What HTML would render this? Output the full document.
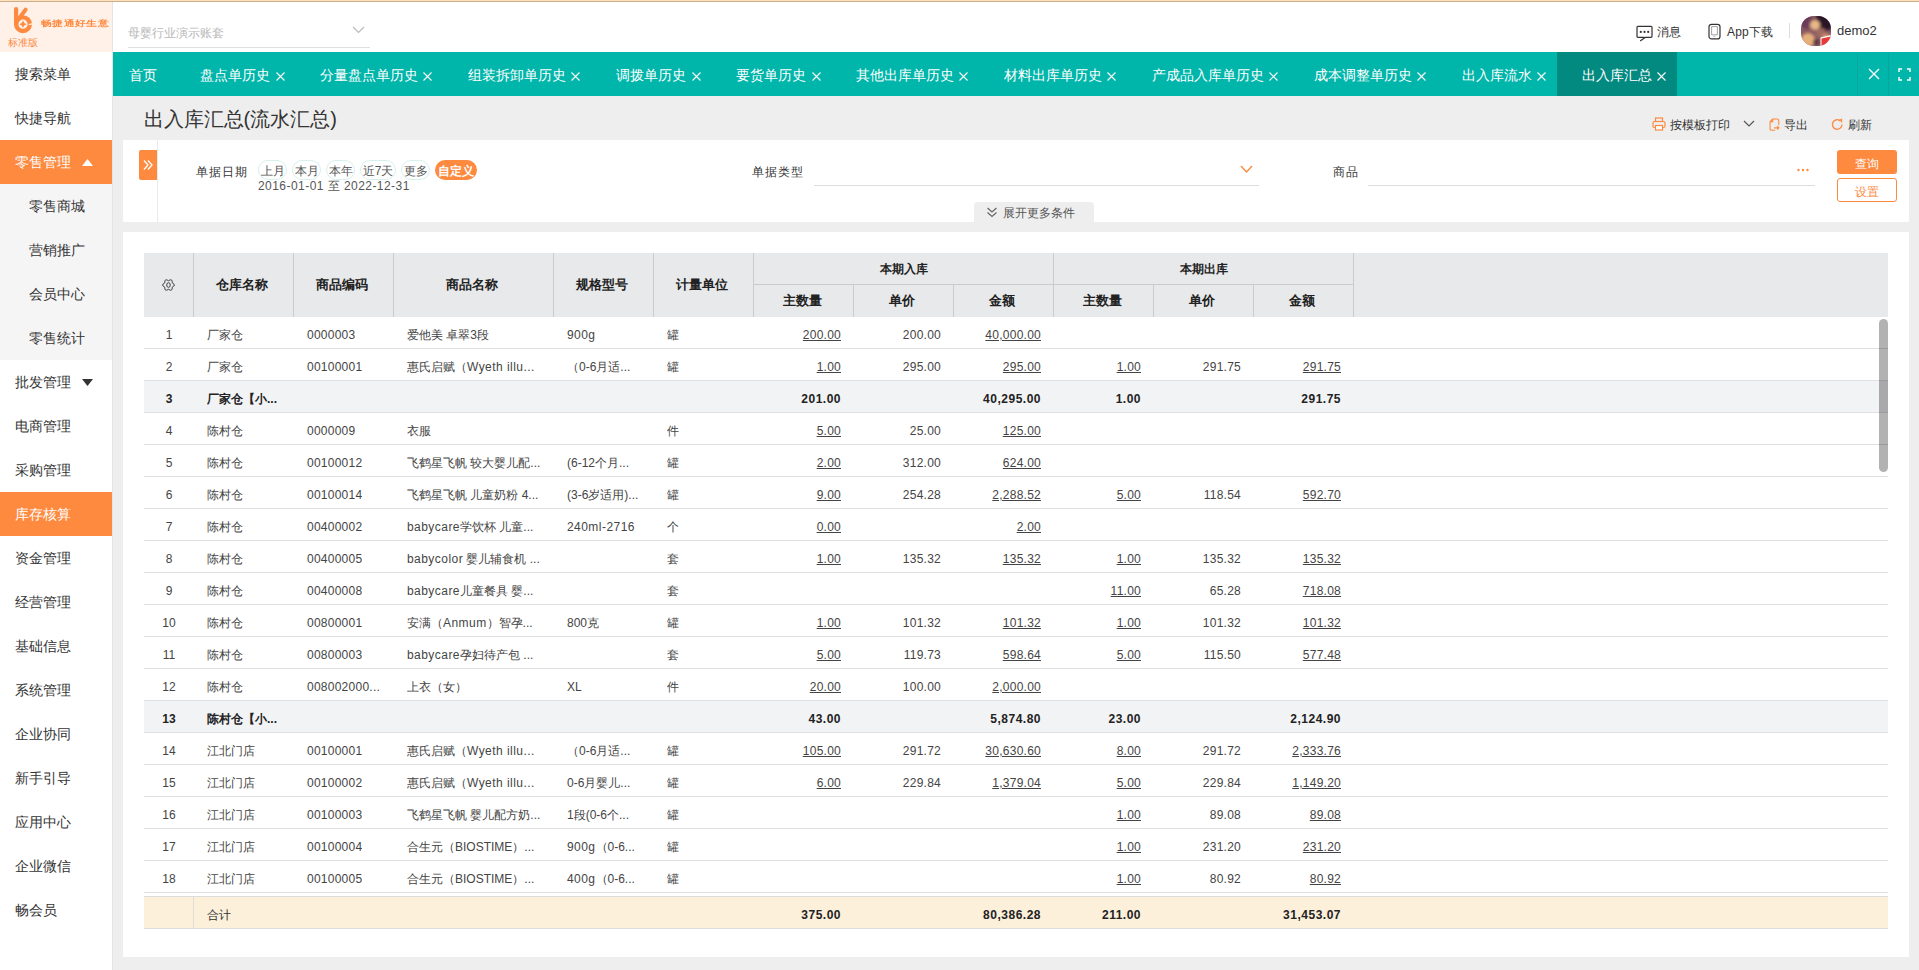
<!DOCTYPE html><html><head><meta charset="utf-8"><style>
*{margin:0;padding:0;box-sizing:border-box}
html,body{width:1919px;height:970px;overflow:hidden;background:#eeeeee;font-family:"Liberation Sans",sans-serif;color:#333}
.a{position:absolute;white-space:nowrap}
#topline{position:absolute;left:0;top:0;width:1919px;height:2px;background:linear-gradient(#ffe1b9 0,#ffe1b9 1px,#ccae90 1px,#ccae90 2px)}
#side{position:absolute;left:0;top:2px;width:113px;height:968px;background:#fff;border-right:1px solid #e4e4e4}
#logo{position:absolute;left:0;top:0;width:112px;height:50px;background:#fff0e8}
.mi{position:absolute;left:0;width:112px;height:44px;font-size:14px;line-height:44px;padding-left:15px;color:#333}
.mi.on{background:#fd8a3f;color:#fff}
.si{position:absolute;left:0;width:112px;height:44px;font-size:14px;line-height:44px;padding-left:29px;color:#333;background:#f5f5f5}
#header{position:absolute;left:113px;top:2px;width:1806px;height:50px;background:#fff}
#tabs{position:absolute;left:113px;top:52px;width:1806px;height:44px;background:#00b5aa}
.tab{position:absolute;top:0;height:44px;line-height:44px;font-size:14px;color:#fff}
.x{position:absolute;top:18px;width:9px;height:9px}
.panel{position:absolute;background:#fff}
table{border-collapse:collapse}
.th{position:absolute;background:#e8e9eb;font-weight:bold;font-size:13px;color:#222;text-align:center}
.row{position:absolute;left:144px;width:1744px;height:32px;border-bottom:1px solid #e3e4e6}
.c{position:absolute;top:0;height:31px;line-height:31px;font-size:12px;color:#444;overflow:hidden;white-space:nowrap}
.r{text-align:right}
.u{text-decoration:underline}
.n{letter-spacing:0.25px}
.m{letter-spacing:0.45px}
.n.b{letter-spacing:0.5px}
.b{font-weight:bold;color:#222}
</style></head><body>
<div id="topline"></div>
<div id="side"><div id="logo"></div></div>
<div class="mi " style="top:52px">搜索菜单</div>
<div class="mi " style="top:96px">快捷导航</div>
<div class="mi on" style="top:140px">零售管理</div>
<div class="si" style="top:184px">零售商城</div>
<div class="si" style="top:228px">营销推广</div>
<div class="si" style="top:272px">会员中心</div>
<div class="si" style="top:316px">零售统计</div>
<div class="mi " style="top:360px">批发管理</div>
<div class="mi " style="top:404px">电商管理</div>
<div class="mi " style="top:448px">采购管理</div>
<div class="mi on" style="top:492px">库存核算</div>
<div class="mi " style="top:536px">资金管理</div>
<div class="mi " style="top:580px">经营管理</div>
<div class="mi " style="top:624px">基础信息</div>
<div class="mi " style="top:668px">系统管理</div>
<div class="mi " style="top:712px">企业协同</div>
<div class="mi " style="top:756px">新手引导</div>
<div class="mi " style="top:800px">应用中心</div>
<div class="mi " style="top:844px">企业微信</div>
<div class="mi " style="top:888px">畅会员</div>
<svg class="a" style="left:82px;top:159px" width="11" height="8"><path d="M5.5 0 L11 7 L0 7Z" fill="#fff"/></svg>
<svg class="a" style="left:82px;top:379px" width="11" height="8"><path d="M0 0 L11 0 L5.5 7Z" fill="#333"/></svg>
<div class="a" style="left:41px;top:17.5px;font-size:11px;color:#fd8a3f;font-weight:bold;transform:scale(1.03,0.77);transform-origin:0 0">畅捷通好生意</div>
<div class="a" style="left:8px;top:36px;font-size:10px;color:#fd8a3f">标准版</div>
<svg class="a" style="left:0;top:0" width="40" height="40" viewBox="0 0 40 40"><g fill="none" stroke="#fd8a3f" stroke-linecap="round"><circle cx="23" cy="24.2" r="6.8" stroke-width="4.3"/><path d="M16.1 9.2 V24" stroke-width="4.2"/><path d="M25.6 9.6 L19.8 17.5" stroke-width="4"/></g><path d="M23 20.6 Q23.6 23.6 26.6 24.2 Q23.6 24.8 23 27.8 Q22.4 24.8 19.4 24.2 Q22.4 23.6 23 20.6Z" fill="#fd8a3f"/><path d="M28.8 24.6 L33 23.6" stroke="#fff0e8" stroke-width="1.3"/></svg>
<div id="header"></div>
<div class="a" style="left:128px;top:25px;font-size:12px;color:#b8b8b8">母婴行业演示账套</div>
<div class="a" style="left:128px;top:47px;width:242px;height:1px;background:#e0e0e0"></div>
<svg class="a" style="left:352px;top:26px" width="13" height="8"><path d="M1 1 L6.5 6.5 L12 1" fill="none" stroke="#bbb" stroke-width="1.2"/></svg>
<svg class="a" style="left:1636px;top:25px" width="17" height="18" viewBox="0 0 17 18"><path d="M8.5 12.3 H2 Q1 12.3 1 11.3 V2.3 Q1 1.3 2 1.3 H15 Q16 1.3 16 2.3 V11.3 Q16 12.3 15 12.3 H9.5 L4.2 16" fill="none" stroke="#333" stroke-width="1.2" stroke-linejoin="round"/><circle cx="4.8" cy="6.9" r="1.1" fill="#333"/><circle cx="8.5" cy="6.9" r="1.1" fill="#333"/><circle cx="12.2" cy="6.9" r="1.1" fill="#333"/></svg>
<div class="a" style="left:1657px;top:24px;font-size:12px;color:#333">消息</div>
<svg class="a" style="left:1708px;top:23px" width="13" height="17" viewBox="0 0 13 17"><rect x="1" y="1.3" width="11" height="14.6" rx="2.5" fill="none" stroke="#333" stroke-width="1.2"/><path d="M3.6 3.6 H9.4 V11.8 H3.6Z" fill="none" stroke="#999" stroke-width="0.9"/><path d="M5.5 12.5 H7.5 V14 H5.5Z" fill="#ccc"/></svg>
<div class="a" style="left:1727px;top:24px;letter-spacing:0.2px;font-size:12px;color:#333">App下载</div>
<div class="a" style="left:1789px;top:23px;width:1px;height:15px;background:#ddd"></div>
<svg class="a" style="left:1801px;top:16px" width="30" height="30" viewBox="0 0 30 30"><defs><clipPath id="avc"><rect x="0" y="0" width="30" height="30" rx="13"/></clipPath><filter id="avb" x="-20%" y="-20%" width="140%" height="140%"><feGaussianBlur stdDeviation="1.6"/></filter></defs><g clip-path="url(#avc)"><rect width="30" height="30" fill="#8a5a62"/><g filter="url(#avb)"><circle cx="24" cy="5" r="10" fill="#2a1228"/><circle cx="6" cy="6" r="7" fill="#6a3a58"/><circle cx="14" cy="9" r="5" fill="#e8b888"/><circle cx="7" cy="24" r="7" fill="#e6b07c"/><circle cx="20" cy="17" r="5" fill="#a06a62"/><circle cx="25" cy="22" r="4" fill="#d89a70"/><circle cx="15" cy="26" r="3" fill="#5a3040"/></g><path d="M19.5 21.5 L30 19 L30 30 L19.5 30Z" fill="#fff"/><path d="M20.5 22.5 L30 20.5 L30 30 L20.5 30Z" fill="#e8383a"/></g></svg>
<div class="a" style="left:1837px;top:23px;font-size:13px;color:#333">demo2</div>
<div id="tabs"></div>
<div class="a" style="left:1557px;top:52px;width:120px;height:44px;background:#028980"></div>
<div class="tab a" style="left:129px;top:53px">首页</div>
<div class="tab a" style="left:199.5px;top:53px">盘点单历史</div>
<svg class="a" style="left:276px;top:72px" width="9" height="9"><path d="M0.5 0.5 L8.5 8.5 M8.5 0.5 L0.5 8.5" stroke="#fff" stroke-width="1.1"/></svg>
<div class="tab a" style="left:319.5px;top:53px">分量盘点单历史</div>
<svg class="a" style="left:423px;top:72px" width="9" height="9"><path d="M0.5 0.5 L8.5 8.5 M8.5 0.5 L0.5 8.5" stroke="#fff" stroke-width="1.1"/></svg>
<div class="tab a" style="left:467.5px;top:53px">组装拆卸单历史</div>
<svg class="a" style="left:571px;top:72px" width="9" height="9"><path d="M0.5 0.5 L8.5 8.5 M8.5 0.5 L0.5 8.5" stroke="#fff" stroke-width="1.1"/></svg>
<div class="tab a" style="left:615.5px;top:53px">调拨单历史</div>
<svg class="a" style="left:692px;top:72px" width="9" height="9"><path d="M0.5 0.5 L8.5 8.5 M8.5 0.5 L0.5 8.5" stroke="#fff" stroke-width="1.1"/></svg>
<div class="tab a" style="left:735.5px;top:53px">要货单历史</div>
<svg class="a" style="left:812px;top:72px" width="9" height="9"><path d="M0.5 0.5 L8.5 8.5 M8.5 0.5 L0.5 8.5" stroke="#fff" stroke-width="1.1"/></svg>
<div class="tab a" style="left:855.5px;top:53px">其他出库单历史</div>
<svg class="a" style="left:959px;top:72px" width="9" height="9"><path d="M0.5 0.5 L8.5 8.5 M8.5 0.5 L0.5 8.5" stroke="#fff" stroke-width="1.1"/></svg>
<div class="tab a" style="left:1003.5px;top:53px">材料出库单历史</div>
<svg class="a" style="left:1107px;top:72px" width="9" height="9"><path d="M0.5 0.5 L8.5 8.5 M8.5 0.5 L0.5 8.5" stroke="#fff" stroke-width="1.1"/></svg>
<div class="tab a" style="left:1151.5px;top:53px">产成品入库单历史</div>
<svg class="a" style="left:1269px;top:72px" width="9" height="9"><path d="M0.5 0.5 L8.5 8.5 M8.5 0.5 L0.5 8.5" stroke="#fff" stroke-width="1.1"/></svg>
<div class="tab a" style="left:1313.5px;top:53px">成本调整单历史</div>
<svg class="a" style="left:1417px;top:72px" width="9" height="9"><path d="M0.5 0.5 L8.5 8.5 M8.5 0.5 L0.5 8.5" stroke="#fff" stroke-width="1.1"/></svg>
<div class="tab a" style="left:1461.5px;top:53px">出入库流水</div>
<svg class="a" style="left:1537px;top:72px" width="9" height="9"><path d="M0.5 0.5 L8.5 8.5 M8.5 0.5 L0.5 8.5" stroke="#fff" stroke-width="1.1"/></svg>
<div class="tab a" style="left:1581.5px;top:53px">出入库汇总</div>
<svg class="a" style="left:1657px;top:72px" width="9" height="9"><path d="M0.5 0.5 L8.5 8.5 M8.5 0.5 L0.5 8.5" stroke="#fff" stroke-width="1.1"/></svg>
<div class="a" style="left:1857px;top:52px;width:1px;height:44px;background:#06a89e"></div>
<div class="a" style="left:1888px;top:52px;width:1px;height:44px;background:#06a89e"></div>
<svg class="a" style="left:1868px;top:68px" width="12" height="12"><path d="M1 1 L11 11 M11 1 L1 11" stroke="#fff" stroke-width="1.4"/></svg>
<svg class="a" style="left:1898px;top:68px" width="13" height="13"><path d="M1 4 V1 H4 M9 1 H12 V4 M12 9 V12 H9 M4 12 H1 V9" fill="none" stroke="#fff" stroke-width="1.4"/></svg>
<div class="a" style="left:143.5px;top:106px;font-size:20px;color:#333">出入库汇总(流水汇总)</div>
<svg class="a" style="left:1652px;top:117px" width="14" height="14" viewBox="0 0 14 14"><rect x="3.5" y="1" width="7" height="3.5" fill="none" stroke="#fd8a3f" stroke-width="1.2"/><rect x="1" y="4.5" width="12" height="6" rx="1.5" fill="none" stroke="#fd8a3f" stroke-width="1.2"/><rect x="3.5" y="8.5" width="7" height="4.5" fill="#fff" stroke="#fd8a3f" stroke-width="1.2"/></svg>
<div class="a" style="left:1670px;top:117px;font-size:12px;color:#333">按模板打印</div>
<svg class="a" style="left:1743px;top:120px" width="12" height="8"><path d="M1 1 L6 6 L11 1" fill="none" stroke="#555" stroke-width="1.2"/></svg>
<svg class="a" style="left:1768.5px;top:118px" width="11.5" height="13.5" viewBox="0 0 13 15"><path d="M4.2 1 H9 Q11 1 11 3 V8.2 M7 13.8 H3 Q1.2 13.8 1.2 12 V4 L4.2 1 V4 H1.2" fill="none" stroke="#fd8a3f" stroke-width="1.2" stroke-linejoin="round"/><path d="M5.8 11 H11.2 M9.2 9 L11.2 11 L9.2 13" fill="none" stroke="#fd8a3f" stroke-width="1.2"/></svg>
<div class="a" style="left:1784px;top:117px;font-size:12px;color:#333">导出</div>
<svg class="a" style="left:1831px;top:118px" width="13" height="13" viewBox="0 0 13 13"><path d="M11 6.5 A4.8 4.8 0 1 1 9.5 3" fill="none" stroke="#fd8a3f" stroke-width="1.3"/><path d="M7.5 2.5 L10.5 1.5 L10.5 4.5" fill="none" stroke="#fd8a3f" stroke-width="1.3"/></svg>
<div class="a" style="left:1848px;top:117px;font-size:12px;color:#333">刷新</div>
<div class="panel" style="left:123px;top:140px;width:1786px;height:82px"></div>
<div class="a" style="left:157px;top:140px;width:1px;height:82px;background:#eaeaea"></div>
<div class="a" style="left:139px;top:150px;width:18px;height:30px;background:#fd8a3f;border-radius:2px 0 0 2px"></div>
<svg class="a" style="left:142px;top:159px" width="12" height="12"><path d="M2 1.5 L6 6 L2 10.5 M6 1.5 L10 6 L6 10.5" fill="none" stroke="#fff" stroke-width="1.3"/></svg>
<div class="a" style="left:196px;top:164px;font-size:12px;letter-spacing:0.9px;color:#333">单据日期</div>
<div class="a" style="left:258px;top:160px;width:29px;height:20px;border:1px solid #d6f0ee;border-radius:10px;font-size:12px;line-height:20px;text-align:center;color:#555">上月</div>
<div class="a" style="left:292px;top:160px;width:29px;height:20px;border:1px solid #d6f0ee;border-radius:10px;font-size:12px;line-height:20px;text-align:center;color:#555">本月</div>
<div class="a" style="left:326px;top:160px;width:29px;height:20px;border:1px solid #d6f0ee;border-radius:10px;font-size:12px;line-height:20px;text-align:center;color:#555">本年</div>
<div class="a" style="left:360px;top:160px;width:36px;height:20px;border:1px solid #d6f0ee;border-radius:10px;font-size:12px;line-height:20px;text-align:center;color:#555">近7天</div>
<div class="a" style="left:401px;top:160px;width:29px;height:20px;border:1px solid #d6f0ee;border-radius:10px;font-size:12px;line-height:20px;text-align:center;color:#555">更多</div>
<div class="a" style="left:435px;top:160px;width:42px;height:20px;background:#fd8a3f;border-radius:10px;font-size:12px;line-height:22px;text-align:center;color:#fff;font-weight:bold">自定义</div>
<div class="a" style="left:258px;top:178px;font-size:12px;letter-spacing:0.45px;color:#555">2016-01-01 至 2022-12-31</div>
<div class="a" style="left:752px;top:164px;font-size:12px;letter-spacing:0.9px;color:#333">单据类型</div>
<div class="a" style="left:814px;top:185px;width:445px;height:1px;background:#ddd"></div>
<svg class="a" style="left:1240px;top:165px" width="13" height="9"><path d="M1 1 L6.5 7 L12 1" fill="none" stroke="#fd8a3f" stroke-width="1.4"/></svg>
<div class="a" style="left:1333px;top:164px;font-size:12px;letter-spacing:0.9px;color:#333">商品</div>
<div class="a" style="left:1368px;top:185px;width:447px;height:1px;background:#ddd"></div>
<svg class="a" style="left:1797px;top:168px" width="12" height="4"><circle cx="1.5" cy="2" r="1.2" fill="#fd8a3f"/><circle cx="6" cy="2" r="1.2" fill="#fd8a3f"/><circle cx="10.5" cy="2" r="1.2" fill="#fd8a3f"/></svg>
<div class="a" style="left:1837px;top:150px;width:60px;height:24px;background:#fd8a3f;border-radius:3px;font-size:12px;line-height:28px;text-align:center;color:#fff">查询</div>
<div class="a" style="left:1837px;top:178px;width:60px;height:24px;border:1px solid #fd8a3f;border-radius:3px;font-size:12px;line-height:26px;text-align:center;color:#fd8a3f">设置</div>
<div class="a" style="left:974px;top:202px;width:120px;height:20px;background:#eeeeee;border-radius:4px 4px 0 0"></div>
<svg class="a" style="left:986px;top:206px" width="12" height="13"><path d="M1.5 2 L6 6 L10.5 2 M1.5 6.5 L6 10.5 L10.5 6.5" fill="none" stroke="#666" stroke-width="1.2"/></svg>
<div class="a" style="left:1003px;top:205px;font-size:12px;color:#555">展开更多条件</div>
<div class="panel" style="left:123px;top:232px;width:1786px;height:725px"></div>
<div class="a" style="left:144px;top:253px;width:1744px;height:64px;background:#e8e9eb"></div>
<div class="a" style="left:193px;top:253px;width:1px;height:64px;background:#cacbcd"></div>
<div class="a" style="left:293px;top:253px;width:1px;height:64px;background:#cacbcd"></div>
<div class="a" style="left:192px;top:253px;width:100px;height:64px;line-height:64px;text-align:center;font-size:13px;font-weight:bold;color:#222">仓库名称</div>
<div class="a" style="left:393px;top:253px;width:1px;height:64px;background:#cacbcd"></div>
<div class="a" style="left:292px;top:253px;width:100px;height:64px;line-height:64px;text-align:center;font-size:13px;font-weight:bold;color:#222">商品编码</div>
<div class="a" style="left:553px;top:253px;width:1px;height:64px;background:#cacbcd"></div>
<div class="a" style="left:392px;top:253px;width:160px;height:64px;line-height:64px;text-align:center;font-size:13px;font-weight:bold;color:#222">商品名称</div>
<div class="a" style="left:653px;top:253px;width:1px;height:64px;background:#cacbcd"></div>
<div class="a" style="left:552px;top:253px;width:100px;height:64px;line-height:64px;text-align:center;font-size:13px;font-weight:bold;color:#222">规格型号</div>
<div class="a" style="left:753px;top:253px;width:1px;height:64px;background:#cacbcd"></div>
<div class="a" style="left:652px;top:253px;width:100px;height:64px;line-height:64px;text-align:center;font-size:13px;font-weight:bold;color:#222">计量单位</div>
<svg class="a" style="left:162px;top:279px" width="13" height="13" viewBox="0 0 13 13"><path d="M10.22 3.85 Q14.60 6.00 10.22 8.15 Q10.55 13.01 6.50 10.30 Q2.45 13.01 2.78 8.15 Q-1.60 6.00 2.78 3.85 Q2.45 -1.01 6.50 1.70 Q10.55 -1.01 10.22 3.85 Z" fill="none" stroke="#444" stroke-width="1"/><ellipse cx="6.5" cy="6" rx="1.8" ry="2.3" fill="none" stroke="#444" stroke-width="1"/></svg>
<div class="a" style="left:754px;top:254px;width:300px;height:31px;line-height:31px;text-align:center;font-size:12px;font-weight:bold;color:#222">本期入库</div>
<div class="a" style="left:754px;top:284px;width:300px;height:1px;background:#cacbcd"></div>
<div class="a" style="left:1053px;top:253px;width:1px;height:64px;background:#cacbcd"></div>
<div class="a" style="left:853px;top:285px;width:1px;height:32px;background:#cacbcd"></div>
<div class="a" style="left:752px;top:285px;width:100px;height:32px;line-height:32px;text-align:center;font-size:13px;font-weight:bold;color:#222">主数量</div>
<div class="a" style="left:953px;top:285px;width:1px;height:32px;background:#cacbcd"></div>
<div class="a" style="left:852px;top:285px;width:100px;height:32px;line-height:32px;text-align:center;font-size:13px;font-weight:bold;color:#222">单价</div>
<div class="a" style="left:952px;top:285px;width:100px;height:32px;line-height:32px;text-align:center;font-size:13px;font-weight:bold;color:#222">金额</div>
<div class="a" style="left:1054px;top:254px;width:300px;height:31px;line-height:31px;text-align:center;font-size:12px;font-weight:bold;color:#222">本期出库</div>
<div class="a" style="left:1054px;top:284px;width:300px;height:1px;background:#cacbcd"></div>
<div class="a" style="left:1353px;top:253px;width:1px;height:64px;background:#cacbcd"></div>
<div class="a" style="left:1153px;top:285px;width:1px;height:32px;background:#cacbcd"></div>
<div class="a" style="left:1052px;top:285px;width:100px;height:32px;line-height:32px;text-align:center;font-size:13px;font-weight:bold;color:#222">主数量</div>
<div class="a" style="left:1253px;top:285px;width:1px;height:32px;background:#cacbcd"></div>
<div class="a" style="left:1152px;top:285px;width:100px;height:32px;line-height:32px;text-align:center;font-size:13px;font-weight:bold;color:#222">单价</div>
<div class="a" style="left:1252px;top:285px;width:100px;height:32px;line-height:32px;text-align:center;font-size:13px;font-weight:bold;color:#222">金额</div>
<div class="a" style="left:144px;top:317px;width:1744px;height:31px;background:#fff"></div>
<div class="a" style="left:144px;top:348px;width:1744px;height:1px;background:#dedfe0"></div>
<div class="c a" style="left:144px;top:320px;width:50px;text-align:center">1</div>
<div class="c a" style="left:207px;top:320px">厂家仓</div>
<div class="c a n" style="left:307px;top:320px">0000003</div>
<div class="c a" style="left:407px;top:320px">爱他美 卓翠3段</div>
<div class="c a" style="left:567px;top:320px"><span class="m">900g</span></div>
<div class="c a" style="left:667px;top:320px">罐</div>
<div class="c a r n u" style="left:754px;top:320px;width:87px">200.00</div>
<div class="c a r n" style="left:854px;top:320px;width:87px">200.00</div>
<div class="c a r n u" style="left:954px;top:320px;width:87px">40,000.00</div>
<div class="a" style="left:144px;top:349px;width:1744px;height:31px;background:#fff"></div>
<div class="a" style="left:144px;top:380px;width:1744px;height:1px;background:#dedfe0"></div>
<div class="c a" style="left:144px;top:352px;width:50px;text-align:center">2</div>
<div class="c a" style="left:207px;top:352px">厂家仓</div>
<div class="c a n" style="left:307px;top:352px">00100001</div>
<div class="c a" style="left:407px;top:352px">惠氏启赋（<span class="m">Wyeth illu...</span></div>
<div class="c a" style="left:567px;top:352px">（0-6月适...</div>
<div class="c a" style="left:667px;top:352px">罐</div>
<div class="c a r n u" style="left:754px;top:352px;width:87px">1.00</div>
<div class="c a r n" style="left:854px;top:352px;width:87px">295.00</div>
<div class="c a r n u" style="left:954px;top:352px;width:87px">295.00</div>
<div class="c a r n u" style="left:1054px;top:352px;width:87px">1.00</div>
<div class="c a r n" style="left:1154px;top:352px;width:87px">291.75</div>
<div class="c a r n u" style="left:1254px;top:352px;width:87px">291.75</div>
<div class="a" style="left:144px;top:381px;width:1744px;height:31px;background:#f2f3f5"></div>
<div class="a" style="left:144px;top:412px;width:1744px;height:1px;background:#dedfe0"></div>
<div class="c a b" style="left:144px;top:384px;width:50px;text-align:center">3</div>
<div class="c a b" style="left:207px;top:384px">厂家仓【小...</div>
<div class="c a r n b" style="left:754px;top:384px;width:87px">201.00</div>
<div class="c a r n b" style="left:954px;top:384px;width:87px">40,295.00</div>
<div class="c a r n b" style="left:1054px;top:384px;width:87px">1.00</div>
<div class="c a r n b" style="left:1254px;top:384px;width:87px">291.75</div>
<div class="a" style="left:144px;top:413px;width:1744px;height:31px;background:#fff"></div>
<div class="a" style="left:144px;top:444px;width:1744px;height:1px;background:#dedfe0"></div>
<div class="c a" style="left:144px;top:416px;width:50px;text-align:center">4</div>
<div class="c a" style="left:207px;top:416px">陈村仓</div>
<div class="c a n" style="left:307px;top:416px">0000009</div>
<div class="c a" style="left:407px;top:416px">衣服</div>
<div class="c a" style="left:667px;top:416px">件</div>
<div class="c a r n u" style="left:754px;top:416px;width:87px">5.00</div>
<div class="c a r n" style="left:854px;top:416px;width:87px">25.00</div>
<div class="c a r n u" style="left:954px;top:416px;width:87px">125.00</div>
<div class="a" style="left:144px;top:445px;width:1744px;height:31px;background:#fff"></div>
<div class="a" style="left:144px;top:476px;width:1744px;height:1px;background:#dedfe0"></div>
<div class="c a" style="left:144px;top:448px;width:50px;text-align:center">5</div>
<div class="c a" style="left:207px;top:448px">陈村仓</div>
<div class="c a n" style="left:307px;top:448px">00100012</div>
<div class="c a" style="left:407px;top:448px">飞鹤星飞帆 较大婴儿配...</div>
<div class="c a" style="left:567px;top:448px">(6-12个月...</div>
<div class="c a" style="left:667px;top:448px">罐</div>
<div class="c a r n u" style="left:754px;top:448px;width:87px">2.00</div>
<div class="c a r n" style="left:854px;top:448px;width:87px">312.00</div>
<div class="c a r n u" style="left:954px;top:448px;width:87px">624.00</div>
<div class="a" style="left:144px;top:477px;width:1744px;height:31px;background:#fff"></div>
<div class="a" style="left:144px;top:508px;width:1744px;height:1px;background:#dedfe0"></div>
<div class="c a" style="left:144px;top:480px;width:50px;text-align:center">6</div>
<div class="c a" style="left:207px;top:480px">陈村仓</div>
<div class="c a n" style="left:307px;top:480px">00100014</div>
<div class="c a" style="left:407px;top:480px">飞鹤星飞帆 儿童奶粉 4...</div>
<div class="c a" style="left:567px;top:480px">(3-6岁适用)...</div>
<div class="c a" style="left:667px;top:480px">罐</div>
<div class="c a r n u" style="left:754px;top:480px;width:87px">9.00</div>
<div class="c a r n" style="left:854px;top:480px;width:87px">254.28</div>
<div class="c a r n u" style="left:954px;top:480px;width:87px">2,288.52</div>
<div class="c a r n u" style="left:1054px;top:480px;width:87px">5.00</div>
<div class="c a r n" style="left:1154px;top:480px;width:87px">118.54</div>
<div class="c a r n u" style="left:1254px;top:480px;width:87px">592.70</div>
<div class="a" style="left:144px;top:509px;width:1744px;height:31px;background:#fff"></div>
<div class="a" style="left:144px;top:540px;width:1744px;height:1px;background:#dedfe0"></div>
<div class="c a" style="left:144px;top:512px;width:50px;text-align:center">7</div>
<div class="c a" style="left:207px;top:512px">陈村仓</div>
<div class="c a n" style="left:307px;top:512px">00400002</div>
<div class="c a" style="left:407px;top:512px"><span class="m">babycare</span>学饮杯 儿童...</div>
<div class="c a" style="left:567px;top:512px"><span class="m">240ml-2716</span></div>
<div class="c a" style="left:667px;top:512px">个</div>
<div class="c a r n u" style="left:754px;top:512px;width:87px">0.00</div>
<div class="c a r n u" style="left:954px;top:512px;width:87px">2.00</div>
<div class="a" style="left:144px;top:541px;width:1744px;height:31px;background:#fff"></div>
<div class="a" style="left:144px;top:572px;width:1744px;height:1px;background:#dedfe0"></div>
<div class="c a" style="left:144px;top:544px;width:50px;text-align:center">8</div>
<div class="c a" style="left:207px;top:544px">陈村仓</div>
<div class="c a n" style="left:307px;top:544px">00400005</div>
<div class="c a" style="left:407px;top:544px"><span class="m">babycolor</span> 婴儿辅食机 ...</div>
<div class="c a" style="left:667px;top:544px">套</div>
<div class="c a r n u" style="left:754px;top:544px;width:87px">1.00</div>
<div class="c a r n" style="left:854px;top:544px;width:87px">135.32</div>
<div class="c a r n u" style="left:954px;top:544px;width:87px">135.32</div>
<div class="c a r n u" style="left:1054px;top:544px;width:87px">1.00</div>
<div class="c a r n" style="left:1154px;top:544px;width:87px">135.32</div>
<div class="c a r n u" style="left:1254px;top:544px;width:87px">135.32</div>
<div class="a" style="left:144px;top:573px;width:1744px;height:31px;background:#fff"></div>
<div class="a" style="left:144px;top:604px;width:1744px;height:1px;background:#dedfe0"></div>
<div class="c a" style="left:144px;top:576px;width:50px;text-align:center">9</div>
<div class="c a" style="left:207px;top:576px">陈村仓</div>
<div class="c a n" style="left:307px;top:576px">00400008</div>
<div class="c a" style="left:407px;top:576px"><span class="m">babycare</span>儿童餐具 婴...</div>
<div class="c a" style="left:667px;top:576px">套</div>
<div class="c a r n u" style="left:1054px;top:576px;width:87px">11.00</div>
<div class="c a r n" style="left:1154px;top:576px;width:87px">65.28</div>
<div class="c a r n u" style="left:1254px;top:576px;width:87px">718.08</div>
<div class="a" style="left:144px;top:605px;width:1744px;height:31px;background:#fff"></div>
<div class="a" style="left:144px;top:636px;width:1744px;height:1px;background:#dedfe0"></div>
<div class="c a" style="left:144px;top:608px;width:50px;text-align:center">10</div>
<div class="c a" style="left:207px;top:608px">陈村仓</div>
<div class="c a n" style="left:307px;top:608px">00800001</div>
<div class="c a" style="left:407px;top:608px">安满（<span class="m">Anmum</span>）智孕...</div>
<div class="c a" style="left:567px;top:608px">800克</div>
<div class="c a" style="left:667px;top:608px">罐</div>
<div class="c a r n u" style="left:754px;top:608px;width:87px">1.00</div>
<div class="c a r n" style="left:854px;top:608px;width:87px">101.32</div>
<div class="c a r n u" style="left:954px;top:608px;width:87px">101.32</div>
<div class="c a r n u" style="left:1054px;top:608px;width:87px">1.00</div>
<div class="c a r n" style="left:1154px;top:608px;width:87px">101.32</div>
<div class="c a r n u" style="left:1254px;top:608px;width:87px">101.32</div>
<div class="a" style="left:144px;top:637px;width:1744px;height:31px;background:#fff"></div>
<div class="a" style="left:144px;top:668px;width:1744px;height:1px;background:#dedfe0"></div>
<div class="c a" style="left:144px;top:640px;width:50px;text-align:center">11</div>
<div class="c a" style="left:207px;top:640px">陈村仓</div>
<div class="c a n" style="left:307px;top:640px">00800003</div>
<div class="c a" style="left:407px;top:640px"><span class="m">babycare</span>孕妇待产包 ...</div>
<div class="c a" style="left:667px;top:640px">套</div>
<div class="c a r n u" style="left:754px;top:640px;width:87px">5.00</div>
<div class="c a r n" style="left:854px;top:640px;width:87px">119.73</div>
<div class="c a r n u" style="left:954px;top:640px;width:87px">598.64</div>
<div class="c a r n u" style="left:1054px;top:640px;width:87px">5.00</div>
<div class="c a r n" style="left:1154px;top:640px;width:87px">115.50</div>
<div class="c a r n u" style="left:1254px;top:640px;width:87px">577.48</div>
<div class="a" style="left:144px;top:669px;width:1744px;height:31px;background:#fff"></div>
<div class="a" style="left:144px;top:700px;width:1744px;height:1px;background:#dedfe0"></div>
<div class="c a" style="left:144px;top:672px;width:50px;text-align:center">12</div>
<div class="c a" style="left:207px;top:672px">陈村仓</div>
<div class="c a n" style="left:307px;top:672px">008002000...</div>
<div class="c a" style="left:407px;top:672px">上衣（女）</div>
<div class="c a" style="left:567px;top:672px">XL</div>
<div class="c a" style="left:667px;top:672px">件</div>
<div class="c a r n u" style="left:754px;top:672px;width:87px">20.00</div>
<div class="c a r n" style="left:854px;top:672px;width:87px">100.00</div>
<div class="c a r n u" style="left:954px;top:672px;width:87px">2,000.00</div>
<div class="a" style="left:144px;top:701px;width:1744px;height:31px;background:#f2f3f5"></div>
<div class="a" style="left:144px;top:732px;width:1744px;height:1px;background:#dedfe0"></div>
<div class="c a b" style="left:144px;top:704px;width:50px;text-align:center">13</div>
<div class="c a b" style="left:207px;top:704px">陈村仓【小...</div>
<div class="c a r n b" style="left:754px;top:704px;width:87px">43.00</div>
<div class="c a r n b" style="left:954px;top:704px;width:87px">5,874.80</div>
<div class="c a r n b" style="left:1054px;top:704px;width:87px">23.00</div>
<div class="c a r n b" style="left:1254px;top:704px;width:87px">2,124.90</div>
<div class="a" style="left:144px;top:733px;width:1744px;height:31px;background:#fff"></div>
<div class="a" style="left:144px;top:764px;width:1744px;height:1px;background:#dedfe0"></div>
<div class="c a" style="left:144px;top:736px;width:50px;text-align:center">14</div>
<div class="c a" style="left:207px;top:736px">江北门店</div>
<div class="c a n" style="left:307px;top:736px">00100001</div>
<div class="c a" style="left:407px;top:736px">惠氏启赋（<span class="m">Wyeth illu...</span></div>
<div class="c a" style="left:567px;top:736px">（0-6月适...</div>
<div class="c a" style="left:667px;top:736px">罐</div>
<div class="c a r n u" style="left:754px;top:736px;width:87px">105.00</div>
<div class="c a r n" style="left:854px;top:736px;width:87px">291.72</div>
<div class="c a r n u" style="left:954px;top:736px;width:87px">30,630.60</div>
<div class="c a r n u" style="left:1054px;top:736px;width:87px">8.00</div>
<div class="c a r n" style="left:1154px;top:736px;width:87px">291.72</div>
<div class="c a r n u" style="left:1254px;top:736px;width:87px">2,333.76</div>
<div class="a" style="left:144px;top:765px;width:1744px;height:31px;background:#fff"></div>
<div class="a" style="left:144px;top:796px;width:1744px;height:1px;background:#dedfe0"></div>
<div class="c a" style="left:144px;top:768px;width:50px;text-align:center">15</div>
<div class="c a" style="left:207px;top:768px">江北门店</div>
<div class="c a n" style="left:307px;top:768px">00100002</div>
<div class="c a" style="left:407px;top:768px">惠氏启赋（<span class="m">Wyeth illu...</span></div>
<div class="c a" style="left:567px;top:768px">0-6月婴儿...</div>
<div class="c a" style="left:667px;top:768px">罐</div>
<div class="c a r n u" style="left:754px;top:768px;width:87px">6.00</div>
<div class="c a r n" style="left:854px;top:768px;width:87px">229.84</div>
<div class="c a r n u" style="left:954px;top:768px;width:87px">1,379.04</div>
<div class="c a r n u" style="left:1054px;top:768px;width:87px">5.00</div>
<div class="c a r n" style="left:1154px;top:768px;width:87px">229.84</div>
<div class="c a r n u" style="left:1254px;top:768px;width:87px">1,149.20</div>
<div class="a" style="left:144px;top:797px;width:1744px;height:31px;background:#fff"></div>
<div class="a" style="left:144px;top:828px;width:1744px;height:1px;background:#dedfe0"></div>
<div class="c a" style="left:144px;top:800px;width:50px;text-align:center">16</div>
<div class="c a" style="left:207px;top:800px">江北门店</div>
<div class="c a n" style="left:307px;top:800px">00100003</div>
<div class="c a" style="left:407px;top:800px">飞鹤星飞帆 婴儿配方奶...</div>
<div class="c a" style="left:567px;top:800px">1段(0-6个...</div>
<div class="c a" style="left:667px;top:800px">罐</div>
<div class="c a r n u" style="left:1054px;top:800px;width:87px">1.00</div>
<div class="c a r n" style="left:1154px;top:800px;width:87px">89.08</div>
<div class="c a r n u" style="left:1254px;top:800px;width:87px">89.08</div>
<div class="a" style="left:144px;top:829px;width:1744px;height:31px;background:#fff"></div>
<div class="a" style="left:144px;top:860px;width:1744px;height:1px;background:#dedfe0"></div>
<div class="c a" style="left:144px;top:832px;width:50px;text-align:center">17</div>
<div class="c a" style="left:207px;top:832px">江北门店</div>
<div class="c a n" style="left:307px;top:832px">00100004</div>
<div class="c a" style="left:407px;top:832px">合生元（BIOSTIME）...</div>
<div class="c a" style="left:567px;top:832px"><span class="m">900g</span>（0-6...</div>
<div class="c a" style="left:667px;top:832px">罐</div>
<div class="c a r n u" style="left:1054px;top:832px;width:87px">1.00</div>
<div class="c a r n" style="left:1154px;top:832px;width:87px">231.20</div>
<div class="c a r n u" style="left:1254px;top:832px;width:87px">231.20</div>
<div class="a" style="left:144px;top:861px;width:1744px;height:31px;background:#fff"></div>
<div class="a" style="left:144px;top:892px;width:1744px;height:1px;background:#dedfe0"></div>
<div class="c a" style="left:144px;top:864px;width:50px;text-align:center">18</div>
<div class="c a" style="left:207px;top:864px">江北门店</div>
<div class="c a n" style="left:307px;top:864px">00100005</div>
<div class="c a" style="left:407px;top:864px">合生元（BIOSTIME）...</div>
<div class="c a" style="left:567px;top:864px"><span class="m">400g</span>（0-6...</div>
<div class="c a" style="left:667px;top:864px">罐</div>
<div class="c a r n u" style="left:1054px;top:864px;width:87px">1.00</div>
<div class="c a r n" style="left:1154px;top:864px;width:87px">80.92</div>
<div class="c a r n u" style="left:1254px;top:864px;width:87px">80.92</div>
<div class="a" style="left:144px;top:896px;width:1744px;height:33px;background:#fcf0da;border-top:1px solid #dcdcdc;border-bottom:1px solid #dcdcdc"></div>
<div class="a" style="left:193px;top:897px;width:1px;height:31px;background:#e0ddd6"></div>
<div class="c a" style="left:207px;top:900px;color:#333">合计</div>
<div class="c a r n b" style="left:754px;top:900px;width:87px">375.00</div>
<div class="c a r n b" style="left:954px;top:900px;width:87px">80,386.28</div>
<div class="c a r n b" style="left:1054px;top:900px;width:87px">211.00</div>
<div class="c a r n b" style="left:1254px;top:900px;width:87px">31,453.07</div>
<div class="a" style="left:1879px;top:319px;width:9px;height:153px;background:rgba(0,0,0,0.3);border-radius:5px"></div>
</body></html>
